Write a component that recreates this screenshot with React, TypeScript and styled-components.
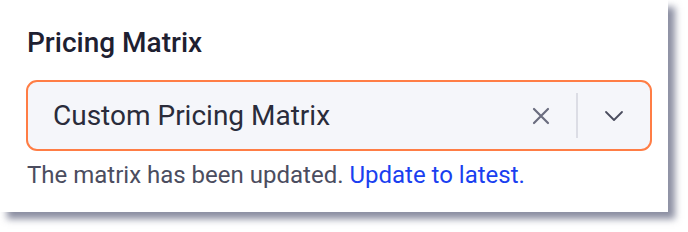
import styled, { createGlobalStyle } from 'styled-components';

const GlobalStyle = createGlobalStyle`
  html, body {
    margin: 0;
    min-height: 100%;
    background: #ffffff;
    font-family: Roboto, "Liberation Sans", sans-serif;
  }
  body {
    height: 232px;
  }
`;

const Card = styled.div`
  width: 668px;
  height: 212px;
  box-sizing: border-box;
  background: #ffffff;
  padding: 27px 16px 0 26px;
  box-shadow: 7px 7px 7px rgba(64, 68, 100, 0.6);
`;

const Label = styled.div`
  font-size: 28px;
  font-weight: 500;
  color: #1e2031;
  line-height: 32px;
  padding-left: 1px;
  margin-bottom: 21px;
`;

const SelectBox = styled.div`
  height: 71px;
  box-sizing: border-box;
  border: 2px solid #ff7d45;
  border-radius: 11px;
  background: #f5f6fa;
  display: flex;
  align-items: center;
  padding-left: 25px;
`;

const Value = styled.div`
  flex: 1;
  font-size: 28px;
  color: #2a2c3b;
`;

const Controls = styled.div`
  display: flex;
  align-items: center;
  height: 100%;
`;

const IconButton = styled.button<{ $width: number }>`
  width: ${(p) => p.$width}px;
  height: 100%;
  border: 0;
  background: transparent;
  padding: 0;
  display: flex;
  align-items: center;
  justify-content: center;
  cursor: pointer;
`;

const Divider = styled.div`
  width: 2px;
  height: 45px;
  background: #dcdde5;
`;

const Hint = styled.p`
  margin: 10px 0 0 1px;
  font-size: 24px;
  line-height: 28px;
  color: #4b4d5f;
`;

const Link = styled.a`
  color: #1a3ff0;
  text-decoration: none;
  cursor: pointer;
`;

export default function App() {
  return (
    <>
      <GlobalStyle />
      <Card>
        <Label>Pricing Matrix</Label>
        <SelectBox>
          <Value>Custom Pricing Matrix</Value>
          <Controls>
            <IconButton $width={70} aria-label="Clear">
              <svg width="18" height="18" viewBox="0 0 18 18">
                <path d="M2 2 L16 16 M16 2 L2 16" stroke="#6b6d7f" strokeWidth="2.2" strokeLinecap="round" />
              </svg>
            </IconButton>
            <Divider />
            <IconButton $width={72} aria-label="Open">
              <svg width="20" height="12" viewBox="0 0 20 12">
                <path d="M2 2 L10 10 L18 2" fill="none" stroke="#4a4c5e" strokeWidth="1.8" strokeLinecap="round" strokeLinejoin="round" />
              </svg>
            </IconButton>
          </Controls>
        </SelectBox>
        <Hint>
          The matrix has been updated. <Link>Update to latest.</Link>
        </Hint>
      </Card>
    </>
  );
}
